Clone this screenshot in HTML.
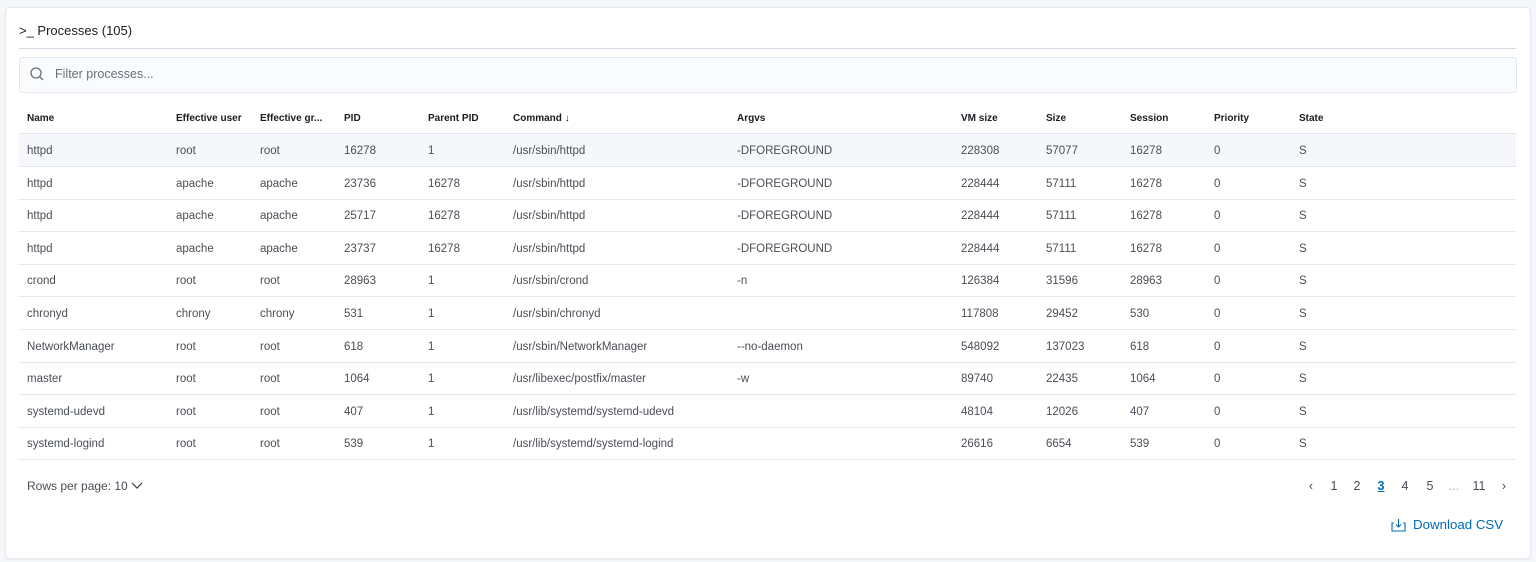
<!DOCTYPE html>
<html><head><style>
body{margin:0;background:#f5f7fa;font-family:"Liberation Sans",sans-serif;width:1536px;height:562px;overflow:hidden;position:relative}
.panel{position:absolute;left:5px;top:7px;width:1524px;height:550px;background:#fff;border:1px solid #e3e8f0;border-radius:4px;box-shadow:0 1px 2px rgba(0,0,0,.06)}
.t{position:absolute;font-size:11.5px;color:#4a4e57;white-space:nowrap}
.h{font-weight:bold;font-size:10px;color:#1a1c21}
.line{position:absolute;left:19px;width:1497px;height:1px;background:#e3e8f0}
.p{position:absolute;top:479px;font-size:12.5px;color:#4a4e57;transform:translateX(-50%)}
</style></head><body>
<div class="panel"></div>
<div class="t" style="left:19px;top:23px;font-size:13px;color:#1a1c21">&gt;_ Processes (105)</div>
<div class="line" style="top:48px;background:#d3dae6"></div>
<div style="position:absolute;left:19px;top:57px;width:1496px;height:34px;background:#fafbfd;border:1px solid #e3e8f0;border-radius:3px"></div>
<svg style="position:absolute;left:29px;top:66px" width="16" height="16" viewBox="0 0 16 16"><circle cx="7" cy="7" r="5" fill="none" stroke="#69707d" stroke-width="1.3"/><line x1="10.5" y1="10.5" x2="14" y2="14" stroke="#69707d" stroke-width="1.3"/></svg>
<div class="t" style="left:55px;top:67px;font-size:12.5px;color:#69707d">Filter processes...</div>
<div style="position:absolute;left:19px;top:134px;width:1497px;height:32px;background:#f5f7fa"></div>
<div id="tbl"></div>
<div class="t" style="left:27px;top:479px;font-size:12px">Rows per page: 10 <svg width="12" height="8" viewBox="0 0 12 8"><path d="M1 1l5 5 5-5" fill="none" stroke="#343741" stroke-width="1.2"/></svg></div>
<div class="p" style="left:1311px">‹</div>
<div class="p" style="left:1334px">1</div>
<div class="p" style="left:1357px">2</div>
<div class="p" style="left:1381px;color:#006bb8;font-weight:bold;text-decoration:underline">3</div>
<div class="p" style="left:1405px">4</div>
<div class="p" style="left:1430px">5</div>
<div class="p" style="left:1454px;color:#aaa">...</div>
<div class="p" style="left:1479px">11</div>
<div class="p" style="left:1504px">›</div>
<svg style="position:absolute;left:1391px;top:518px" width="16" height="14" viewBox="0 0 16 14"><path d="M3 5H1v8h13V5h-2M7.5 1v8M5 6.5l2.5 2.5 2.5-2.5" fill="none" stroke="#006bb8" stroke-width="1.1"/></svg>
<div class="t" style="left:1413px;top:517px;font-size:13.3px;color:#006bb8">Download CSV</div>
<script>
const cx=[27,176,260,344,428,513,737,961,1046,1130,1214,1299];
const hd=["Name","Effective user","Effective gr...","PID","Parent PID","Command ↓","Argvs","VM size","Size","Session","Priority","State"];
const rows=[
["httpd","root","root","16278","1","/usr/sbin/httpd","-DFOREGROUND","228308","57077","16278","0","S"],
["httpd","apache","apache","23736","16278","/usr/sbin/httpd","-DFOREGROUND","228444","57111","16278","0","S"],
["httpd","apache","apache","25717","16278","/usr/sbin/httpd","-DFOREGROUND","228444","57111","16278","0","S"],
["httpd","apache","apache","23737","16278","/usr/sbin/httpd","-DFOREGROUND","228444","57111","16278","0","S"],
["crond","root","root","28963","1","/usr/sbin/crond","-n","126384","31596","28963","0","S"],
["chronyd","chrony","chrony","531","1","/usr/sbin/chronyd","","117808","29452","530","0","S"],
["NetworkManager","root","root","618","1","/usr/sbin/NetworkManager","--no-daemon","548092","137023","618","0","S"],
["master","root","root","1064","1","/usr/libexec/postfix/master","-w","89740","22435","1064","0","S"],
["systemd-udevd","root","root","407","1","/usr/lib/systemd/systemd-udevd","","48104","12026","407","0","S"],
["systemd-logind","root","root","539","1","/usr/lib/systemd/systemd-logind","","26616","6654","539","0","S"]];
let h='';
hd.forEach((s,i)=>h+=`<div class="t h" style="left:${cx[i]}px;top:113px">${s}</div>`);
h+=`<div class="line" style="top:133px"></div>`;
rows.forEach((r,j)=>{const y=150+j*32.6;r.forEach((s,i)=>h+=`<div class="t" style="left:${cx[i]}px;top:${y-5}px">${s}</div>`);h+=`<div class="line" style="top:${Math.round(y+16)}px"></div>`;});
document.getElementById('tbl').innerHTML=h;
</script>
</body></html>
